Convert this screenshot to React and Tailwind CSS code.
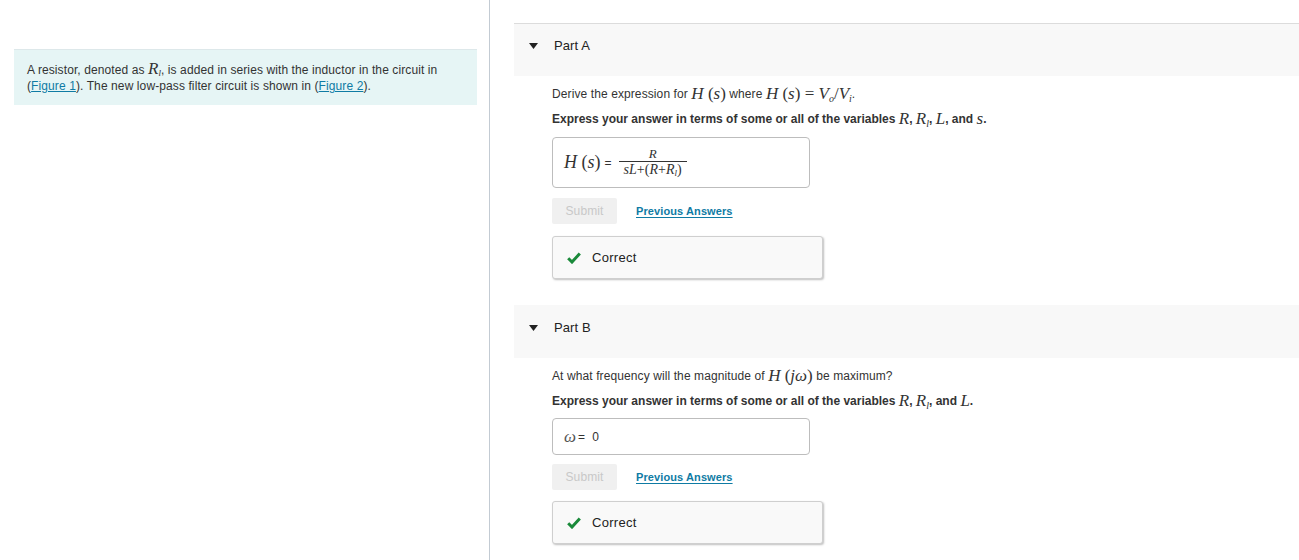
import React from "react";

const SERIF = '"Liberation Serif", "DejaVu Serif", serif';

const M = ({ children, className = "" }) => (
  <span className={"italic text-[17px] " + className} style={{ fontFamily: SERIF, letterSpacing: 0 }}>
    {children}
  </span>
);
const Up = ({ children, className = "" }) => (
  <span className={"not-italic " + className} style={{ fontFamily: SERIF }}>
    {children}
  </span>
);

const Tri = () => (
  <svg width="9" height="6" viewBox="0 0 9 6" className="shrink-0">
    <path d="M0 0 L9 0 L4.5 6 Z" fill="#222" />
  </svg>
);

const Check = () => (
  <svg width="14" height="12" viewBox="0 0 14 12">
    <path d="M1.2 6.2 L5 10 L12.8 1.6" fill="none" stroke="#1a8a3a" strokeWidth="3" strokeLinejoin="miter" />
  </svg>
);

const PartHeader = ({ label, border }) => (
  <div className={"h-[53px] bg-[#f8f8f8] flex items-center pb-[8px] pl-[15px] " + (border ? "border-t border-[#dcdcdc]" : "")}>
    <Tri />
    <span className="ml-[16px] text-[13px] text-[#222]">{label}</span>
  </div>
);

const Buttons = () => (
  <div className="flex items-center mt-[10px]">
    <div className="w-[65px] h-[26px] bg-[#f0f0f0] rounded-[2px] flex items-center justify-center text-[12px] text-[#c8c8c8]">
      Submit
    </div>
    <a className="ml-[19px] text-[11px] font-bold text-[#0f7ba4] underline underline-offset-2">Previous Answers</a>
  </div>
);

const Correct = () => (
  <div className="mt-[12px] w-[271px] h-[43px] bg-[#f9f9f9] border border-[#cfcfcf] rounded-[3px] shadow-[1px_1px_2px_rgba(0,0,0,0.25)] flex items-center pl-[14px]">
    <Check />
    <span className="ml-[11px] text-[13px] tracking-[0.3px] text-[#222]">Correct</span>
  </div>
);

export default function App() {
  return (
    <div className="w-[1299px] h-[560px] bg-white flex text-[#333] tracking-[0.1px]" style={{ fontFamily: '"Liberation Sans", Arial, sans-serif' }}>
      <div className="w-[489px] shrink-0 pt-[49px] px-[14px]">
        <div className="w-[463px] h-[56px] bg-[#e6f5f5] border-t border-[#dde8ea] px-[13px] pt-[11px] text-[12px] leading-[16px] text-[#333]">
          <div>
            A resistor, denoted as <M className="text-[16px]">R<sub className="text-[9px]">l</sub></M>, is added in series with the inductor in the circuit in
          </div>
          <div>
            (<a className="text-[#0f7ba4] underline">Figure 1</a>). The new low-pass filter circuit is shown in (<a className="text-[#0f7ba4] underline">Figure 2</a>).
          </div>
        </div>
      </div>
      <div className="w-px bg-[#c3cbd3] shrink-0" />
      <div className="flex-1 pl-[24px] pt-[23px]">
        <PartHeader label="Part A" border />
        <div className="pl-[38px]">
          <div className="mt-[8px] h-[20px] flex items-center text-[12px] text-[#333]">
            <span>Derive the expression for&nbsp;</span>
            <M>H <Up>(</Up>s<Up>)</Up></M>
            <span>&nbsp;where&nbsp;</span>
            <M>H <Up>(</Up>s<Up>)</Up> <Up>=</Up> V<sub className="text-[10px]">o</sub><Up>/</Up>V<sub className="text-[10px]">i</sub></M>
            <span>.</span>
          </div>
          <div className="mt-[5px] h-[20px] flex items-center text-[12px] font-bold text-[#333] tracking-normal">
            <span>Express your answer in terms of some or all of the variables&nbsp;</span>
            <M className="font-normal">R</M><span>,&nbsp;</span>
            <M className="font-normal">R<sub className="text-[10px]">l</sub></M><span>,&nbsp;</span>
            <M className="font-normal">L</M><span>, and&nbsp;</span>
            <M className="font-normal">s</M><span>.</span>
          </div>
          <div className="mt-[8px] w-[258px] h-[51px] border border-[#bdbdbd] rounded-[4px] flex items-center pl-[11px]">
            <M className="text-[18px]">H <Up>(</Up>s<Up>)</Up></M>
            <span className="ml-[4px] text-[12px] text-[#333]">=</span>
            <div className="ml-[7px] flex flex-col items-center" style={{ fontFamily: SERIF, letterSpacing: 0 }}>
              <span className="italic text-[13px] leading-[14px] text-[#333]">R</span>
              <div className="h-px w-[68px] bg-[#333]" />
              <span className="italic text-[14px] leading-[16px] text-[#333]">sL<Up>+(</Up>R<Up>+</Up>R<sub className="text-[9px]">l</sub><Up>)</Up></span>
            </div>
          </div>
          <Buttons />
          <Correct />
        </div>
        <div className="mt-[26px]">
          <PartHeader label="Part B" />
        </div>
        <div className="pl-[38px]">
          <div className="mt-[8px] h-[20px] flex items-center text-[12px] text-[#333]">
            <span>At what frequency will the magnitude of&nbsp;</span>
            <M>H <Up>(</Up>jω<Up>)</Up></M>
            <span>&nbsp;be maximum?</span>
          </div>
          <div className="mt-[5px] h-[20px] flex items-center text-[12px] font-bold text-[#333] tracking-normal">
            <span>Express your answer in terms of some or all of the variables&nbsp;</span>
            <M className="font-normal">R</M><span>,&nbsp;</span>
            <M className="font-normal">R<sub className="text-[10px]">l</sub></M><span>, and&nbsp;</span>
            <M className="font-normal">L</M><span>.</span>
          </div>
          <div className="mt-[7px] w-[258px] h-[37px] border border-[#bdbdbd] rounded-[4px] flex items-center pl-[11px] text-[12px]">
            <M className="text-[13px] text-[#555]">ω</M>
            <span className="ml-[2px]">=</span>
            <span className="ml-[7px]">0</span>
          </div>
          <div className="-mt-px">
            <Buttons />
          </div>
          <div className="-mt-px">
            <Correct />
          </div>
        </div>
      </div>
    </div>
  );
}
